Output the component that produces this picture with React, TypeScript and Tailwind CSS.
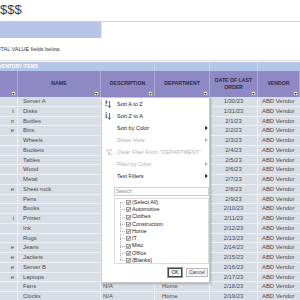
import React from "react";

const names = ["Server A","Disks","Bottles","Bins","Wheels","Buckets","Tables","Wood","Metal","Sheet rock","Pens","Books","Printer","Ink","Rugs","Jeans","Jackets","Server B","Laptops","Fans","Clocks"];
const frag = ["","t","n","e","","","","","","e","","","i","","","e","e","e","e","",""];
const dates = ["1/30/23","1/31/23",...Array.from({length:19},(_,i)=>`2/${i+1}/23`)];

function FilterBtn() {
  return (
    <div className="absolute right-[1px] bottom-[1px] w-[5px] h-[5px] bg-white border border-[#9a9a9a] flex items-center justify-center">
      <svg width="3" height="2" viewBox="0 0 3 2"><path d="M0 0H3L1.5 2Z" fill="#444"/></svg>
    </div>
  );
}

function Arrow({gray}:{gray?:boolean}) {
  return (
    <svg width="3" height="4" viewBox="0 0 3 4" className="absolute left-[103px]"><path d="M0 0L3 2L0 4Z" fill={gray?"#b5b5b5":"#222"}/></svg>
  );
}

function SortIcon({up}:{up:boolean}) {
  return (
    <div className="absolute left-[3px] flex items-center gap-[0.5px]">
      <div className="flex flex-col text-[3.6px] leading-[3.4px] font-bold text-[#2d5a9b]">
        <span>{up?"A":"Z"}</span><span>{up?"Z":"A"}</span>
      </div>
      <svg width="3" height="7" viewBox="0 0 3 7"><path d="M1.5 0V6M0 4.5L1.5 6.5L3 4.5" stroke="#333" strokeWidth="0.7" fill="none"/></svg>
    </div>
  );
}

function Check() {
  return (
    <svg width="5" height="5" viewBox="0 0 5 5" className="shrink-0">
      <rect x="0.5" y="0.5" width="4" height="4" fill="white" stroke="#666" strokeWidth="0.6"/>
      <path d="M1.2 2.5L2.1 3.5L3.9 1.3" stroke="#222" strokeWidth="0.8" fill="none"/>
    </svg>
  );
}

function Menu() {
  const items: {label:string; gray?:boolean; arrow?:boolean; icon?:React.ReactNode}[] = [
    {label:"Sort A to Z", icon:<SortIcon up/>},
    {label:"Sort Z to A", icon:<SortIcon up={false}/>},
    {label:"Sort by Color", arrow:true},
    {label:"Sheet View", gray:true, arrow:true},
    {label:"Clear Filter From \"DEPARTMENT\"", gray:true, icon:(
      <svg width="7" height="7" viewBox="0 0 7 7" className="absolute left-[4px]"><path d="M0.5 0.8H5.5L3.6 3.3V6L2.4 5.3V3.3Z" fill="none" stroke="#aaa" strokeWidth="0.6"/><path d="M4.6 4.4L6.4 6.2M6.4 4.4L4.6 6.2" stroke="#c99" strokeWidth="0.6"/></svg>
    )},
    {label:"Filter by Color", gray:true, arrow:true},
    {label:"Text Filters", arrow:true},
  ];
  const list = ["(Select All)","Automotive","Clothes","Construction","Home","IT","Misc","Office","(Blanks)"];
  return (
    <div className="absolute left-[101px] top-[97px] w-[109px] h-[186px] bg-white border border-[#c8c8c8] shadow-[1px_1px_2px_rgba(0,0,0,0.25)] text-[5.5px] text-[#222]">
      {items.map((it,i)=>(
        <div key={i} className={`relative h-[12px] flex items-center ${it.gray?"text-[#b0b0b0]":"text-[#222]"}`}>
          {it.icon}
          <span className="ml-[15px]">{it.label}</span>
          {it.arrow && <Arrow gray={it.gray}/>}
        </div>
      ))}
      <div className="mt-[5px] ml-[12px] w-[95px] h-[9px] border border-[#cfcfcf] flex items-center pl-[1px] text-[5px] text-[#8a8a8a]">Search</div>
      <div className="mt-[2px] ml-[12px] w-[95px] h-[66px] border border-[#dcdcdc] relative">
        <div className="absolute left-[5px] top-[3px] h-[58px] border-l border-dotted border-[#b0b0b0]"/>
        {list.map((l,i)=>(
          <div key={i} className="h-[7.25px] flex items-center">
            <div className="w-[5px] ml-[5px] border-t border-dotted border-[#b0b0b0] mr-[0.5px]"/>
            <Check/>
            <span className="ml-[1.5px] text-[5.5px] leading-none">{l}</span>
          </div>
        ))}
      </div>
      <div className="mt-[4px] flex justify-end gap-[4px] pr-[1px]">
        <div className="w-[14px] h-[9px] border border-[#444] bg-[#f3f3f3] flex items-center justify-center text-[5px] outline outline-[0.5px] outline-[#999]">OK</div>
        <div className="w-[22px] h-[9px] border border-[#bbb] bg-[#f3f3f3] flex items-center justify-center text-[5px] text-[#444]">Cancel</div>
      </div>
    </div>
  );
}

export default function App() {
  const cols = "grid grid-cols-[18px_83px_54px_55px_48px_42px]";
  return (
    <div className="relative w-[300px] h-[300px] overflow-hidden bg-white font-['Liberation_Sans',Arial,sans-serif]">
      <div className="h-[21px] text-[13px] leading-[19px] text-[#3a3a3a]">$$$</div>
      <div className="h-px bg-[#d0d0d0]"/>
      <div className="flex h-[16px]">
        <div className="w-[101px] bg-[#b4c6e7]"/>
        <div className="flex-1 border-l border-[#e6e6e6]"/>
      </div>
      <div className="h-[22px] flex items-center text-[5.5px] text-[#333] -ml-[1px]">ITAL VALUE fields below.</div>
      <div className="h-px bg-[#e2e2e2]"/>
      <div className="h-[1px]"/>
      <div className={`${cols} h-[9px] bg-[#b4c6e7]`}>
        <div className="col-span-2 text-[4.8px] font-bold text-white flex items-center -ml-[1px]">VENTORY ITEMS</div>
        <div className="border-r border-[#c9d5ee]"/>
        <div className="border-r border-[#c9d5ee]"/>
        <div className="border-r border-[#c9d5ee]"/>
        <div/>
      </div>
      <div className={`${cols} h-[26px] bg-[#8e89c5] text-[5.2px] font-bold text-[#2c2c44] text-center leading-[7px]`}>
        {["","NAME","DESCRIPTION","DEPARTMENT","DATE OF LAST\nORDER","VENDOR"].map((h,i)=>(
          <div key={i} className="relative flex items-center justify-center border-r border-[#aeaad8] whitespace-pre-line pb-[1px]">
            {h}
            <FilterBtn/>
          </div>
        ))}
      </div>
      <div className="flex flex-col text-[5.9px] text-[#4a4a4a]">
        {names.map((n,i)=>(
          <div key={i} className={`${cols} h-[9.75px] bg-[#d9dee6] border-b border-[#eef0f4]`}>
            <div className="flex items-center justify-end pr-[3px] border-r border-[#eef0f4] overflow-hidden">{frag[i]}</div>
            <div className="flex items-center pl-[5px] border-r border-[#eef0f4]">{n}</div>
            <div className="flex items-center pl-[2px] border-r border-[#eef0f4]">{i >= 19 ? "N/A" : ""}</div>
            <div className="flex items-center pl-[7px] border-r border-[#eef0f4]">{i >= 19 ? "Home" : ""}</div>
            <div className="flex items-center justify-center border-r border-[#eef0f4]">{dates[i]}</div>
            <div className="flex items-center pl-[4px] whitespace-nowrap">ABD Vendor</div>
          </div>
        ))}
      </div>
      <Menu/>
    </div>
  );
}
